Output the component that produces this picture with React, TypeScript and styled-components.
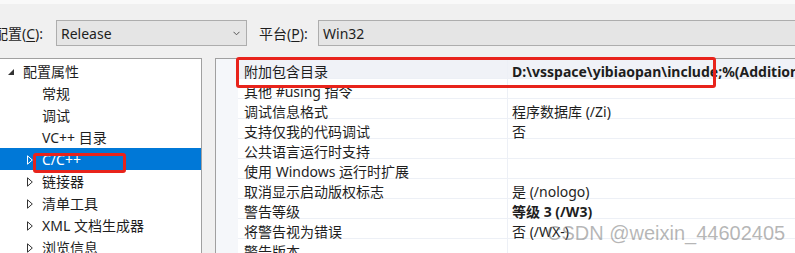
import styled, {createGlobalStyle} from 'styled-components';

const GlobalStyle = createGlobalStyle`
	html, body {
		margin: 0;
		padding: 0;
		background: #f0f0f0;
	}
	body {
		font-family: 'Noto Sans', 'Noto Sans CJK SC', sans-serif;
		font-size: 14px;
		color: #1e1e1e;
	}
`;

interface ITreeItem {
	label: string;
	level: number;
	arrow?: 'open' | 'closed';
	selected?: boolean;
}

interface IProp {
	name: string;
	value?: string;
	bold?: boolean;
}

const treeItems: ITreeItem[] = [
	{label: '配置属性', level: 0, arrow: 'open'},
	{label: '常规', level: 1},
	{label: '调试', level: 1},
	{label: 'VC++ 目录', level: 1},
	{label: 'C/C++', level: 1, arrow: 'closed', selected: true},
	{label: '链接器', level: 1, arrow: 'closed'},
	{label: '清单工具', level: 1, arrow: 'closed'},
	{label: 'XML 文档生成器', level: 1, arrow: 'closed'},
	{label: '浏览信息', level: 1, arrow: 'closed'},
];

const props: IProp[] = [
	{
		name: '附加包含目录',
		value: 'D:\\vsspace\\yibiaopan\\include;%(AdditionalIncludeDirectories)',
		bold: true,
	},
	{name: '其他 #using 指令'},
	{name: '调试信息格式', value: '程序数据库 (/Zi)'},
	{name: '支持仅我的代码调试', value: '否'},
	{name: '公共语言运行时支持'},
	{name: '使用 Windows 运行时扩展'},
	{name: '取消显示启动版权标志', value: '是 (/nologo)'},
	{name: '警告等级', value: '等级 3 (/W3)', bold: true},
	{name: '将警告视为错误', value: '否 (/WX-)'},
	{name: '警告版本'},
];

const Page = styled.div`
	position: relative;
	width: 795px;
	height: 253px;
	overflow: hidden;
	border-top: 4px solid #f9f9f9;
	box-sizing: border-box;
	background: #f0f0f0;
`;

const Toolbar = styled.div`
	display: grid;
	grid-template-columns: 56px 191px 71px 520px;
	align-items: center;
	height: 26px;
	margin-top: 16px;
`;

const Label = styled.label<{$right?: boolean}>`
	white-space: nowrap;
	text-align: ${(p) => (p.$right ? 'right' : 'left')};
	padding: ${(p) => (p.$right ? '0 13px 0 0' : '0 0 0 12px')};
	direction: ${(p) => (p.$right ? 'rtl' : 'ltr')};
	overflow: visible;
	u {
		text-decoration-thickness: 1px;
		text-underline-offset: 2px;
	}
`;

const Select = styled.div`
	display: flex;
	align-items: center;
	justify-content: space-between;
	height: 26px;
	box-sizing: border-box;
	border: 1px solid #adadad;
	background: #e5e5e5;
	padding: 0 6px 0 4px;
`;

const Main = styled.div`
	display: flex;
	margin-top: 12px;
	height: 200px;
`;

const Tree = styled.div`
	width: 202px;
	flex-shrink: 0;
	box-sizing: border-box;
	background: #fff;
	border-top: 1px solid #a0a0a0;
	border-right: 1px solid #a0a0a0;
	padding-top: 1px;
`;

const TreeRow = styled.div<{$level: number; $selected?: boolean}>`
	display: flex;
	align-items: center;
	height: 22px;
	padding-left: ${(p) => 8 + p.$level * 19}px;
	background: ${(p) => (p.$selected ? '#0078d7' : 'transparent')};
	color: ${(p) => (p.$selected ? '#fff' : '#1e1e1e')};
	white-space: nowrap;
`;

const Arrow = styled.span`
	display: flex;
	align-items: center;
	width: 6px;
	margin-right: 9px;
	padding-top: 2px;
`;

const Grid = styled.div`
	width: 620px;
	flex-shrink: 0;
	margin-left: 13px;
	box-sizing: border-box;
	background: #fff;
	border-top: 1px solid #a0a0a0;
	border-left: 1px solid #a0a0a0;
`;

const PropRow = styled.div<{$active?: boolean}>`
	display: grid;
	grid-template-columns: 22px 269px 1fr;
	height: 20px;
	background: ${(p) => (p.$active ? '#f0f2f7' : '#fff')};
`;

const Gutter = styled.div`
	background: #f5f7fa;
`;

const Cell = styled.div<{$bold?: boolean; $value?: boolean}>`
	box-sizing: border-box;
	height: 20px;
	line-height: 20px;
	padding: 3px 0 0 ${(p) => (p.$value ? 4 : 6)}px;
	border-bottom: 1px solid #edf0f6;
	border-left: ${(p) => (p.$value ? '1px solid #edf0f6' : 'none')};
	font-weight: ${(p) => (p.$bold ? 700 : 400)};
	white-space: nowrap;
`;

const Mark = styled.div`
	position: absolute;
	border: 3px solid #e8231b;
	border-radius: 3px;
	box-sizing: border-box;
	pointer-events: none;
`;

const Watermark = styled.div`
	position: absolute;
	left: 547px;
	top: 218px;
	font-family: 'Liberation Sans', Arial, sans-serif;
	font-size: 20px;
	color: rgba(110, 110, 110, 0.5);
	white-space: nowrap;
`;

function Chevron() {
	return (
		<svg width="7" height="5" viewBox="0 0 7 5">
			<path d="M0.5 0.8 L3.5 3.8 L6.5 0.8" fill="none" stroke="#555" strokeWidth="1" />
		</svg>
	);
}

function TreeArrow({kind, selected}: {kind: 'open' | 'closed'; selected?: boolean}) {
	if (kind === 'open') {
		return (
			<svg width="6" height="6" viewBox="0 0 6 6">
				<path d="M6 0 L6 6 L0 6 Z" fill="#333" />
			</svg>
		);
	}
	return (
		<svg width="6" height="10" viewBox="0 0 6 10">
			<path
				d="M0.5 0.8 L5.3 5 L0.5 9.2 Z"
				fill="none"
				stroke={selected ? '#fff' : '#333'}
				strokeWidth="1"
			/>
		</svg>
	);
}

function App() {
	return (
		<>
			<GlobalStyle />
			<Page>
				<Toolbar>
					<Label $right>
						<span style={{direction: 'ltr', unicodeBidi: 'isolate'}}>
							配置(<u>C</u>):
						</span>
					</Label>
					<Select>
						<span>Release</span>
						<Chevron />
					</Select>
					<Label>
						平台(<u>P</u>):
					</Label>
					<Select>
						<span>Win32</span>
					</Select>
				</Toolbar>
				<Main>
					<Tree>
						{treeItems.map((item) => (
							<TreeRow key={item.label} $level={item.level} $selected={item.selected}>
								<Arrow>
									{item.arrow && <TreeArrow kind={item.arrow} selected={item.selected} />}
								</Arrow>
								{item.label}
							</TreeRow>
						))}
					</Tree>
					<Grid>
						{props.map((p, i) => (
							<PropRow key={p.name} $active={i === 0}>
								<Gutter />
								<Cell>{p.name}</Cell>
								<Cell $value $bold={p.bold}>
									{p.value}
								</Cell>
							</PropRow>
						))}
					</Grid>
				</Main>
				<Mark style={{left: 236, top: 53, width: 480, height: 31}} />
				<Mark style={{left: 33, top: 149, width: 93, height: 20}} />
				<Watermark>CSDN @weixin_44602405</Watermark>
			</Page>
		</>
	);
}

export default App;
